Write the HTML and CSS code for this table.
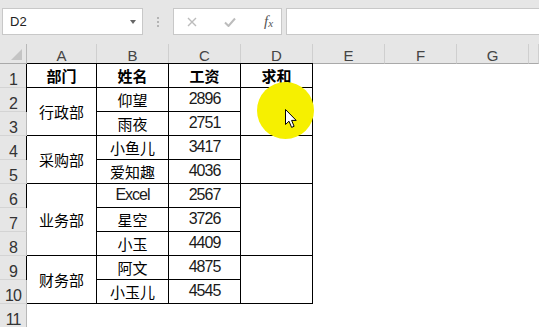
FILE: index.html
```html
<!DOCTYPE html>
<html lang="zh-CN">

<head>
    <meta charset="UTF-8">
    <meta name="viewport" content="width=device-width, initial-scale=1.0">
    <title>求和</title>
    <link rel="stylesheet" href="styles.css">
</head>

<body>
    <!-- name box + formula bar -->
    <div class="formula-bar">
        <div class="name-box">
            <span>D2</span>
            <span class="caret"></span>
        </div>
        <div class="grip"><i></i><i></i><i></i></div>
        <div class="fx-buttons">
            <svg class="icon" width="10" height="10" viewBox="0 0 10 10">
                <path d="M1 1 L9 9 M9 1 L1 9" stroke="#bcbcbc" stroke-width="1.4" fill="none" />
            </svg>
            <svg class="icon" width="12" height="10" viewBox="0 0 12 10">
                <path d="M1 5.5 L4.5 9 L11 1.5" stroke="#bcbcbc" stroke-width="2" fill="none" />
            </svg>
            <span class="fx">f<sub>x</sub></span>
        </div>
        <div class="formula-input"></div>
    </div>

    <div class="sheet">
        <div class="corner"><span class="tri"></span></div>
        <div class="col-head">A</div>
        <div class="col-head">B</div>
        <div class="col-head">C</div>
        <div class="col-head">D</div>
        <div class="col-head">E</div>
        <div class="col-head">F</div>
        <div class="col-head">G</div>
        <div class="col-head"></div>

        <div class="row-head">1</div>
        <div class="cell top first bold">部门</div>
        <div class="cell top bold">姓名</div>
        <div class="cell top bold">工资</div>
        <div class="cell top bold">求和</div>

        <div class="row-head">2</div>
        <div class="cell first span2">行政部</div>
        <div class="cell">仰望</div>
        <div class="cell num">2896</div>
        <div class="cell span2"></div>

        <div class="row-head">3</div>
        <div class="cell">雨夜</div>
        <div class="cell num">2751</div>

        <div class="row-head">4</div>
        <div class="cell first span2">采购部</div>
        <div class="cell">小鱼儿</div>
        <div class="cell num">3417</div>
        <div class="cell span2"></div>

        <div class="row-head">5</div>
        <div class="cell">爱知趣</div>
        <div class="cell num">4036</div>

        <div class="row-head">6</div>
        <div class="cell first span3">业务部</div>
        <div class="cell num">Excel</div>
        <div class="cell num">2567</div>
        <div class="cell span3"></div>

        <div class="row-head">7</div>
        <div class="cell">星空</div>
        <div class="cell num">3726</div>

        <div class="row-head">8</div>
        <div class="cell">小玉</div>
        <div class="cell num">4409</div>

        <div class="row-head">9</div>
        <div class="cell first span2">财务部</div>
        <div class="cell">阿文</div>
        <div class="cell num">4875</div>
        <div class="cell span2"></div>

        <div class="row-head">10</div>
        <div class="cell">小玉儿</div>
        <div class="cell num">4545</div>

        <div class="row-head">11</div>

        <!-- click highlight and pointer -->
        <div class="spot"></div>
        <svg class="pointer" width="13" height="20" viewBox="0 0 13 20">
            <path d="M0.5 0.5 L0.5 15.5 L4 12.2 L6.6 18.4 L9.1 17.3 L6.6 11.4 L11.2 11.4 Z"
                fill="#fff" stroke="#000" stroke-width="1" stroke-linejoin="round" />
        </svg>
    </div>
</body>

</html>
```

FILE: styles.css
```css
* {
    margin: 0;
    padding: 0;
    box-sizing: border-box;
}

body {
    width: 539px;
    height: 327px;
    overflow: hidden;
    background-color: #fff;
    font-family: "Liberation Sans", "Noto Sans CJK SC", sans-serif;
    color: #000;
}

/* top bar */
.formula-bar {
    height: 44px;
    background-color: #e6e6e6;
    display: flex;
    align-items: flex-start;
    padding-top: 8px;
}

.name-box {
    width: 141px;
    height: 27px;
    margin-left: 2px;
    background-color: #fff;
    border: 1px solid #c8c8c8;
    display: flex;
    align-items: center;
    justify-content: space-between;
    padding: 0 6px 0 7px;
    font-size: 13px;
    color: #222;
}

.caret {
    width: 0;
    height: 0;
    border-left: 3.5px solid transparent;
    border-right: 3.5px solid transparent;
    border-top: 4px solid #666;
}

.grip {
    width: 30px;
    height: 27px;
    display: flex;
    flex-direction: column;
    align-items: center;
    justify-content: center;
    gap: 2px;
}

.grip i {
    width: 2px;
    height: 2px;
    background-color: #b4b4b4;
}

.fx-buttons {
    width: 109px;
    height: 27px;
    background-color: #fff;
    border: 1px solid #c8c8c8;
    display: flex;
    align-items: center;
    padding-left: 13px;
}

.fx-buttons .icon {
    margin-right: 27px;
}

.fx-buttons .icon + .icon {
    margin-right: 28px;
}

.fx {
    font-family: "Liberation Serif", serif;
    font-style: italic;
    font-size: 15px;
    color: #555;
}

.fx sub {
    font-size: 11px;
    vertical-align: -1px;
}

.formula-input {
    flex: 1;
    height: 27px;
    margin-left: 4px;
    background-color: #fff;
    border: 1px solid #c8c8c8;
    border-right: none;
}

/* worksheet */
.sheet {
    position: relative;
    display: grid;
    grid-template-columns: 27px 70px 72px 72px 72px 72px 72px 72px 1fr;
    grid-template-rows: 20px repeat(11, 24px);
}

.corner,
.col-head {
    background-color: #e6e6e6;
    border-bottom: 1px solid #a9a9a9;
    border-right: 1px solid #cfcfcf;
}

.corner {
    position: relative;
    border-right-color: #b8b8b8;
}

.corner .tri {
    position: absolute;
    right: 4px;
    bottom: 3px;
    width: 0;
    height: 0;
    border-left: 11px solid transparent;
    border-bottom: 11px solid #c4c4c4;
}

.col-head {
    text-align: center;
    font-size: 15px;
    line-height: 16px;
    padding-top: 4px;
    color: #444;
}

.row-head {
    grid-column: 1;
    background-color: #e6e6e6;
    border-right: 1px solid #b8b8b8;
    border-bottom: 1px solid #d4d4d4;
    text-align: center;
    font-size: 16px;
    letter-spacing: -1px;
    line-height: 14px;
    padding-top: 9px;
    color: #333;
    overflow: hidden;
}

.cell {
    border-right: 1px solid #000;
    border-bottom: 1px solid #000;
    display: flex;
    align-items: center;
    justify-content: center;
    font-size: 15px;
    padding-bottom: 1px;
}

.cell.num {
    font-size: 16px;
    letter-spacing: -1px;
    color: #1a1a1a;
}

.cell.bold {
    font-weight: bold;
}

.cell.top {
    margin-top: -1px;
    border-top: 1px solid #000;
}

.cell.first {
    margin-left: -1px;
    border-left: 1px solid #000;
}

.span2 {
    grid-row: span 2;
}

.span3 {
    grid-row: span 3;
}

.spot {
    position: absolute;
    left: 257px;
    top: 38px;
    width: 57px;
    height: 57px;
    border-radius: 50%;
    background-color: #f6f000;
    filter: blur(0.6px);
}

.pointer {
    position: absolute;
    left: 285px;
    top: 65px;
}
```
